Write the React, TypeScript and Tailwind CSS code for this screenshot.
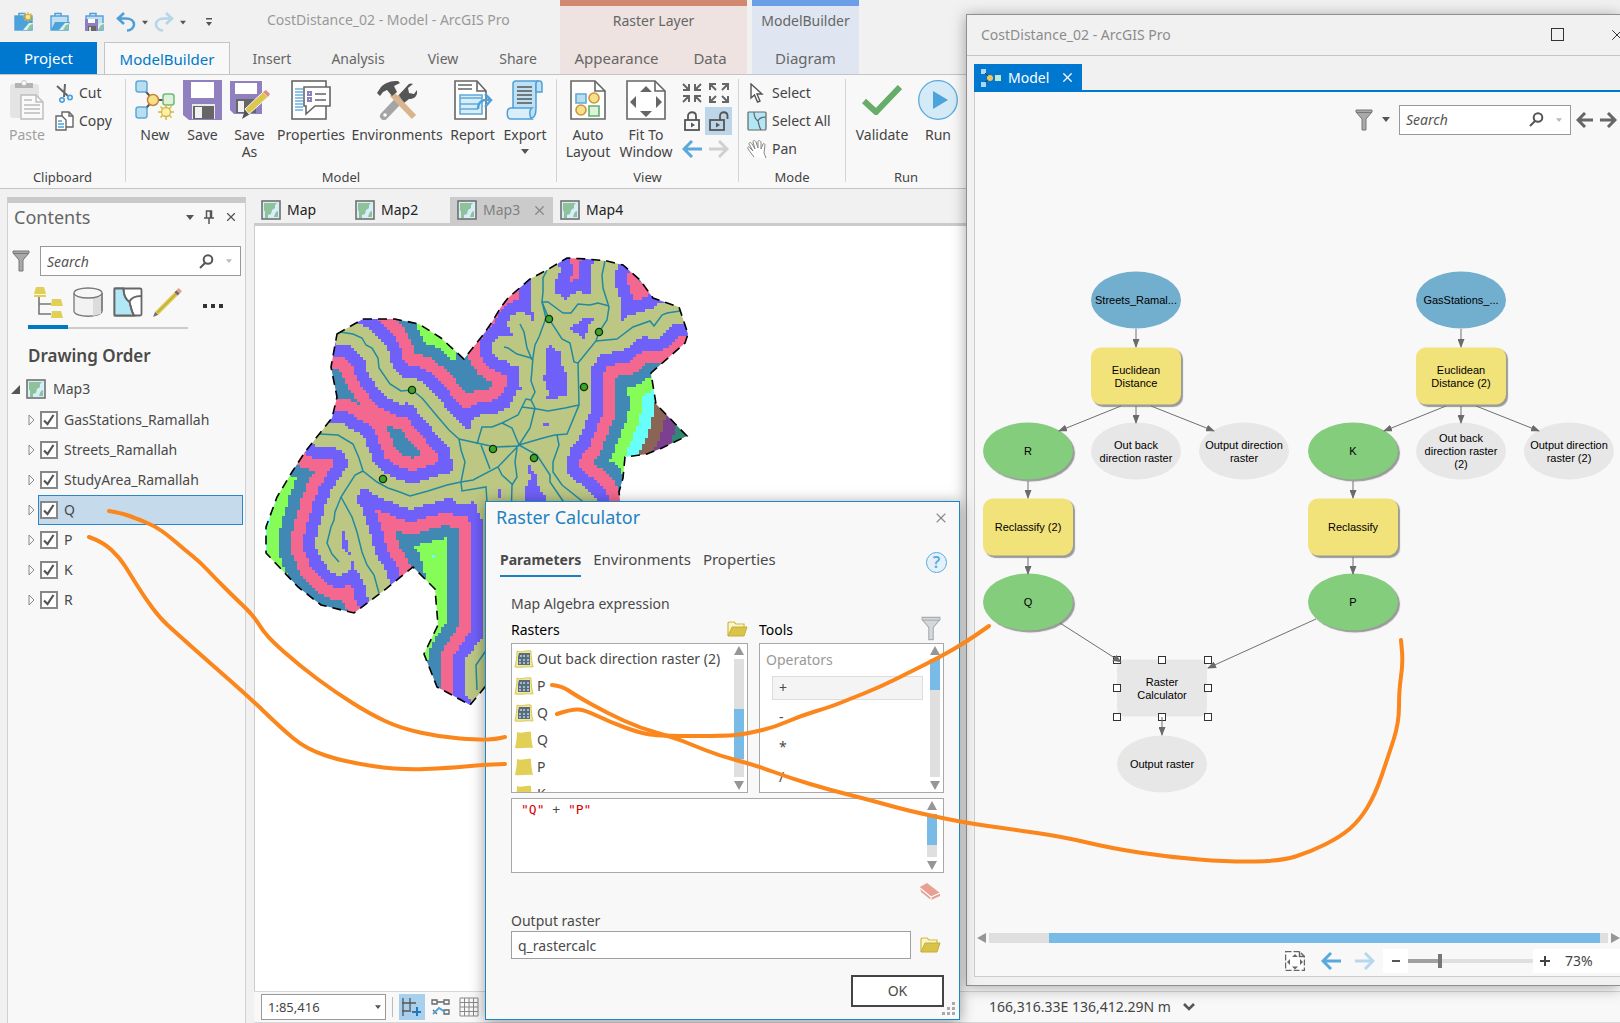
import React from 'react';
import { X } from 'lucide-react';

type Point = [number, number];

/* ---------- map data ---------- */

const STREETS: Point[][] = [
  [[340, 332], [353, 334], [362, 338], [366, 345], [372, 348], [378, 358], [379, 368], [390, 384], [401, 391], [412, 390], [422, 398], [437, 416], [449, 430], [459, 439], [477, 443], [495, 447], [519, 446]],
  [[319, 434], [338, 435], [353, 444], [359, 458], [363, 471], [377, 482], [388, 488], [397, 491], [410, 496], [428, 491], [447, 485], [461, 482], [473, 480], [498, 467], [519, 445]],
  [[363, 471], [355, 475], [341, 497], [335, 512], [334, 520], [331, 527], [327, 543], [332, 554], [339, 562]],
  [[341, 497], [352, 517], [357, 532], [362, 552], [367, 565], [374, 575], [379, 593]],
  [[459, 439], [461, 450], [465, 462], [461, 482], [462, 491], [486, 487], [487, 502], [495, 520], [495, 640], [485, 652], [476, 665], [477, 690]],
  [[547, 270], [543, 278], [543, 292], [542, 302], [546, 318], [539, 337], [535, 345], [533, 357], [532, 370], [531, 381], [535, 392], [531, 400], [535, 408], [530, 428], [519, 445]],
  [[542, 302], [548, 302], [563, 313], [571, 313], [578, 304], [590, 305], [598, 303], [609, 306]],
  [[605, 261], [602, 275], [603, 288], [609, 307], [607, 320], [599, 332], [596, 341], [578, 363]],
  [[542, 302], [549, 319], [562, 339], [570, 343], [574, 362], [578, 363], [579, 405], [567, 434], [555, 435], [543, 438], [519, 445]],
  [[596, 341], [617, 339], [633, 327], [650, 321], [654, 326], [662, 315], [667, 313], [680, 311]],
  [[520, 324], [524, 332], [527, 348], [532, 360]],
  [[504, 347], [508, 348], [517, 354], [531, 358]],
  [[522, 407], [537, 409], [548, 411], [565, 408], [579, 405]],
  [[531, 400], [526, 399], [518, 415], [502, 423], [492, 427], [482, 427], [477, 444]],
  [[502, 423], [512, 428], [519, 445]],
  [[481, 445], [490, 469]],
  [[498, 467], [502, 475], [513, 485]],
  [[517, 448], [515, 462], [517, 477], [512, 485], [511, 520]],
  [[519, 445], [537, 455], [550, 475], [550, 482], [563, 501], [580, 530]],
  [[557, 435], [559, 445], [553, 462], [553, 472], [562, 485], [582, 501], [600, 530]],
];

const STUDY_AREA: Point[] = [
  [337, 334], [363, 319], [395, 319], [419, 324], [441, 338], [464, 359], [483, 335], [492, 322], [501, 307], [508, 298],
  [530, 279], [547, 270], [567, 258], [587, 259], [607, 261], [623, 265], [640, 280], [653, 298], [679, 307], [688, 334],
  [685, 343], [651, 373], [656, 404], [687, 436], [662, 448], [647, 454], [625, 457], [623, 478], [619, 492], [621, 508],
  [600, 560], [560, 640], [500, 680], [485, 687], [470, 705], [452, 695], [437, 687], [424, 654], [438, 625], [435, 589],
  [413, 567], [382, 592], [354, 613], [321, 605], [298, 587], [266, 553], [266, 527], [277, 497], [292, 472], [305, 452],
  [332, 418], [337, 397], [331, 367],
];

const STATIONS: Point[] = [[549, 319], [599, 332], [584, 387], [493, 449], [534, 458], [412, 390], [383, 479]];

const BAND_COLORS = ['#bcc784', '#7060fa', '#f4688f', '#4188b5', '#86fc58', '#66fffa', '#8a6455', '#7b4090', '#308775'];
const BAND_WIDTH = 12.3;
const CELL = 3;

const toPoints = (pts: Point[]) => pts.map((p) => p.join(',')).join(' ');

function distanceToStreets(x: number, y: number) {
  let best = Infinity;
  for (const line of STREETS) {
    for (let i = 1; i < line.length; i++) {
      const [x1, y1] = line[i - 1];
      const [x2, y2] = line[i];
      const dx = x2 - x1;
      const dy = y2 - y1;
      const t = Math.max(0, Math.min(1, ((x - x1) * dx + (y - y1) * dy) / (dx * dx + dy * dy)));
      best = Math.min(best, Math.hypot(x - x1 - t * dx, y - y1 - t * dy));
    }
  }
  return best;
}

// one path per distance band, built from horizontal runs of cells
function buildBands() {
  const paths = BAND_COLORS.map(() => '');
  for (let y = 255; y < 710; y += CELL) {
    let start = 261;
    let current = -1;
    for (let x = 261; x <= 696; x += CELL) {
      const band = x === 696 ? -1 : Math.min(8, Math.floor(distanceToStreets(x + 1, y + 1) / BAND_WIDTH));
      if (band !== current) {
        if (current >= 0) paths[current] += `M${start} ${y}h${x - start}v${CELL}h${start - x}z`;
        start = x;
        current = band;
      }
    }
  }
  return paths;
}

const BANDS = buildBands();

function RasterMap() {
  return (
    <svg width="712" height="765" viewBox="255 226 712 765" className="block shrink-0">
      <clipPath id="study-area">
        <polygon points={toPoints(STUDY_AREA)} />
      </clipPath>
      <g clipPath="url(#study-area)">
        {BANDS.map((d, i) => (
          <path key={i} d={d} fill={BAND_COLORS[i]} shapeRendering="crispEdges" />
        ))}
        {STREETS.map((line, i) => (
          <polyline key={i} points={toPoints(line)} fill="none" stroke="#218aa0" strokeWidth="1.5" />
        ))}
      </g>
      <polygon points={toPoints(STUDY_AREA)} fill="none" stroke="#000" strokeWidth="1.6" strokeDasharray="9 6" />
      {STATIONS.map(([x, y]) => (
        <circle key={x} cx={x} cy={y} r="3.6" fill="#3fa42d" stroke="#10300c" strokeWidth="1.3" />
      ))}
    </svg>
  );
}

/* ---------- icons ---------- */

const Caret = ({ className = 'fill-[#555]' }: { className?: string }) => (
  <svg width="8" height="5" viewBox="0 0 8 5" className={className}><path d="M0 0h8L4 5z" /></svg>
);

const Funnel = ({ light = false }: { light?: boolean }) => (
  <svg width={light ? 20 : 18} height={light ? 25 : 22} viewBox="0 0 18 22" fill={light ? '#d5d8db' : '#a9a9a9'} stroke={light ? '#a9adb0' : '#777'}>
    <path d="M1 1h16v2l-6 7v11H7V10L1 3z" /><path d="M1 3.5h16" />
  </svg>
);

const Magnifier = () => (
  <svg width="15" height="15" viewBox="0 0 15 15" fill="none" stroke="#555" strokeWidth="2">
    <circle cx="9" cy="5.5" r="4.3" /><path d="M6 9L1 14" />
  </svg>
);

const Arrow = ({ color, flip = false }: { color: string; flip?: boolean }) => (
  <svg width="20" height="18" viewBox="0 0 20 18" fill="none" stroke={color} strokeWidth="3" className={flip ? 'rotate-180' : ''}>
    <path d="M20 9H3M10 1L2 9l8 8" />
  </svg>
);

const MapIcon = () => (
  <svg width="20" height="20" viewBox="0 0 20 20" className="shrink-0">
    <rect x="1" y="1" width="18" height="18" fill="#d6eef8" stroke="#707070" strokeWidth="1.6" />
    <path d="M3 3h13l-2 2v3l-3 2-1 4-3 1v3H4v-6L3 10z" fill="#8fc19a" />
    <path d="M15 12l2-1v6h-4l1-3z" fill="#8fc19a" />
  </svg>
);

const Folder = () => (
  <svg width="21" height="16" viewBox="0 0 21 16">
    <path d="M1 15V2l1-1h5l2 2h8v4" fill="#faf5cf" stroke="#cdb93e" strokeWidth="1.2" />
    <path d="M1 15l4-9h15l-3 9z" fill="#d9c348" stroke="#c5af35" />
  </svg>
);

const Pencil = ({ size = 30 }: { size?: number }) => (
  <svg width={size} height={size} viewBox="0 0 28 28">
    <path d="M0 28l2-5 3 3z" fill="#6d6d6d" />
    <path d="M2 23L20 5l3 3L5 26z" fill="#dcc84c" />
    <path d="M4 24L22 6" stroke="#b9a437" />
    <path d="M20 5l2-2 3 3-2 2z" fill="#6b6b6b" />
    <path d="M22 3l2-2 3 3-2 2z" fill="#e79c8f" />
  </svg>
);

const Briefcase = ({ kind }: { kind: 'new' | 'open' | 'save' }) => (
  <svg width="21" height="20" viewBox="0 0 21 20">
    <path d="M5 4V1.500h6V4" fill="none" stroke="#4e9fd8" strokeWidth="1.5" />
    <rect x="1" y="4" width="17" height="14" fill={kind === 'new' ? '#4ca3dc' : '#bfe0f3'} stroke="#4e9fd8" strokeWidth="1.4" />
    {kind === 'open' && <path d="M1 18l4-8h15l-3 8z" fill="#4ca3dc" />}
    <path d="M9 18l6-7h4l-2 7z" fill="#dff0e6" />
    <path d="M13 18l3-5 3-1-2 6z" fill="#8cc2a0" />
    {kind === 'new' && <path d="M14 0v10M9 5h10M10.500 1.500l7 7M17.500 1.500l-7 7" stroke="#dcb53c" strokeWidth="1.2" />}
    {kind === 'new' && <circle cx="14" cy="5" r="2.8" fill="#f8e58c" stroke="#d5ac35" />}
    {kind === 'save' && (
      <g>
        <path d="M0 7h13v12H0z" fill="#8f7fbe" /><path d="M3 7h7v4H3z" fill="#fff" /><path d="M3 14h8v5H3z" fill="#666" /><path d="M4 15h2v4H4z" fill="#ddd" />
      </g>
    )}
  </svg>
);

const Undo = ({ color, flip = false }: { color: string; flip?: boolean }) => (
  <svg width="20" height="20" viewBox="0 0 20 20" fill="none" stroke={color} strokeWidth="2.6" className={flip ? '-scale-x-100' : ''}>
    <path d="M8 1L2 6.500 8 12M2 6.500h8c5 0 8 2.500 8 6 0 3-3 6-7 6" />
  </svg>
);

const PasteIcon = () => (
  <svg width="36" height="40" viewBox="0 0 36 40">
    <rect x="1" y="4" width="29" height="34" rx="3" fill="#e4e4e4" />
    <path d="M6 3h18v5H6z" fill="#b3b3b3" /><circle cx="15" cy="3" r="2.500" fill="#fff" stroke="#c5c5c5" />
    <path d="M12 15h15l7 7v17H12z" fill="#fafafa" stroke="#bcbcbc" strokeWidth="1.4" />
    <path d="M27 15v7h7M15 20h8M15 25h16M15 29h16M15 33h16" fill="none" stroke="#bcbcbc" strokeWidth="1.4" />
  </svg>
);

const CutIcon = () => (
  <svg width="17" height="19" viewBox="0 0 17 19" fill="none">
    <path d="M1 2l11 10M9 0l-1 13" stroke="#666" strokeWidth="2" />
    <circle cx="6" cy="16" r="2.200" stroke="#4ca3dc" strokeWidth="1.700" /><circle cx="14" cy="13.500" r="2.200" stroke="#4ca3dc" strokeWidth="1.700" />
  </svg>
);

const CopyIcon = () => (
  <svg width="19" height="20" viewBox="0 0 19 20" fill="#fff" stroke="#666" strokeWidth="1.400">
    <path d="M7 1h7l4 4v11H7z" /><path d="M14 1v4h4" fill="none" />
    <path d="M1 5h6l4 4v10H1z" /><path d="M3 10h4M3 13h6M3 16h6" stroke="#4ca3dc" />
  </svg>
);

const NewModelIcon = () => (
  <svg width="40" height="40" viewBox="0 0 40 40">
    <path d="M8 8l10 12L8 32M18 20h14" stroke="#555" strokeWidth="2" fill="none" />
    <rect x="1" y="1" width="11" height="11" rx="2.500" fill="#b8def2" stroke="#62a8d6" strokeWidth="1.500" />
    <rect x="1" y="27" width="11" height="11" rx="2.500" fill="#b8def2" stroke="#62a8d6" strokeWidth="1.500" />
    <circle cx="18" cy="20" r="5.500" fill="#f6e18a" stroke="#c9823c" strokeWidth="1.500" />
    <rect x="28" y="14" width="11" height="11" rx="2.500" fill="#ddf1dd" stroke="#6dba74" strokeWidth="1.500" />
    <path d="M31 24v16M23 32h16M25.500 26.500l11 11M36.500 26.500l-11 11" stroke="#d8b63e" strokeWidth="1.500" />
    <circle cx="31" cy="32" r="4.500" fill="#faf0ae" stroke="#d8b63e" strokeWidth="1.300" />
  </svg>
);

const SaveIcon = () => (
  <svg width="40" height="40" viewBox="0 0 40 40">
    <path d="M0 0h39v40H6l-6-5z" fill="#9080bf" /><path d="M8 2h23v16H8z" fill="#fff" />
    <path d="M9 24h23v15H9z" fill="#e9e9e9" /><path d="M10 26h21v13H10z" fill="#666" /><path d="M12 27h7v11h-7z" fill="#f1f1f1" />
  </svg>
);

const SaveAsIcon = () => (
  <svg width="40" height="40" viewBox="0 0 40 40">
    <path d="M0 1h32v33H4l-4-4z" fill="#9080bf" /><path d="M5 3h22v11H5z" fill="#fff" />
    <path d="M6 19h20v14H6z" fill="#666" /><path d="M8 21h6v11H8z" fill="#f1f1f1" />
    <path d="M12 39l3-9 5 4z" fill="#555" /><path d="M15 29L33 12l5 5-19 17z" fill="#dcc84c" stroke="#f8f8f8" />
    <path d="M33 12l3-2 4 4-2 3z" fill="#dd8d84" />
  </svg>
);

const PropertiesIcon = () => (
  <svg width="40" height="40" viewBox="0 0 40 40" fill="#fff" stroke="#666" strokeWidth="1.600">
    <rect x="1" y="1" width="34" height="38" />
    <path d="M4 9h8M4 12h8M4 15h8M4 18h8M4 21h8M4 24h8M4 27h8M4 30h8" stroke="#69b1e0" strokeWidth="1.300" />
    <path d="M13 7h26v19H24l-9 8v-8h-2z" />
    <path d="M17 12h3v3h-3zM17 18h3v3h-3z" stroke="#8f7fbe" strokeWidth="2" /><path d="M24 14h11M24 20h11" />
  </svg>
);

const ToolsIcon = () => (
  <svg width="40" height="40" viewBox="0 0 40 40">
    <path d="M27 15L7 36" stroke="#a5a5a5" strokeWidth="8" strokeLinecap="round" /><circle cx="8" cy="35" r="1.800" fill="#fff" />
    <path d="M22 15l8-9c2-3 4-3 6-2l-5 4 1 5 5 1 3-4c1 6-3 9-8 9l-5 4z" fill="#555" />
    <path d="M15 14l22 23" stroke="#d8b58d" strokeWidth="6" />
    <path d="M0 13l4-6C9 2 14 1 21 1l2 2-6 3 3 6-5 4-5-6-4 2-3 4z" fill="#555" />
  </svg>
);

const ReportIcon = () => (
  <svg width="40" height="40" viewBox="0 0 40 40" fill="#fff" stroke="#666" strokeWidth="1.600">
    <path d="M2 1h22l9 10v28H2z" /><path d="M24 1v10h9M5 5h14M5 9h14" fill="none" />
    <path d="M7 15h22v19H7z" fill="#d7edf8" stroke="#62a8d6" /><path d="M7 18h22M7 24h18M7 29h18" stroke="#62a8d6" />
    <path d="M25 29c0-7 4-10 13-9M32 14l6 6-6 7" fill="none" stroke="#4ca3dc" strokeWidth="2.500" />
  </svg>
);

const ExportIcon = () => (
  <svg width="38" height="40" viewBox="0 0 38 40" fill="#bfe0f3" stroke="#4e9fd8" strokeWidth="1.500">
    <path d="M7 29V4c0-2 1-3 3-3h22c-2 1-2 3-2 5v22c0 5-1 10-5 10" />
    <path d="M30 12h6V4c0-4-5-4-6-1z" /><path d="M5 28h21c-3 2-3 8 0 11H5c-5 0-5-11 0-11z" fill="#d9eef9" />
    <path d="M11 7h15M11 11h15M11 15h15M11 19h15M11 23h15" stroke="#555" />
  </svg>
);

const AutoLayoutIcon = () => (
  <svg width="36" height="40" viewBox="0 0 36 40" strokeWidth="1.600">
    <path d="M1 1h24l10 10v28H1z" fill="#fff" stroke="#666" /><path d="M25 1v10h10" fill="none" stroke="#666" />
    <path d="M6 14h10v9H6z" fill="#b8def2" stroke="#62a8d6" /><circle cx="24" cy="18" r="5" fill="#f6e18a" stroke="#c9963c" />
    <circle cx="11" cy="30" r="5" fill="#f6e18a" stroke="#c9963c" /><path d="M19 26h10v10H19z" fill="#ddf1dd" stroke="#5fb069" />
  </svg>
);

const FitIcon = ({ small = false }: { small?: boolean }) => (
  <svg width={small ? 20 : 40} height={small ? 20 : 40} viewBox="0 0 40 40" strokeWidth={small ? 3 : 1.6}>
    <path d="M1 1h28l10 10v28H1z" fill="#fff" stroke="#666" strokeDasharray={small ? '12 4' : undefined} />
    <path d="M29 1v10h10" fill="none" stroke="#666" />
    <path d="M14 12h12l-6-6zM14 31h12l-6 6zM10 16v12l-6-6zM30 16v12l6-6z" fill="#666" />
  </svg>
);

const CornerArrows = ({ inward = false }: { inward?: boolean }) => (
  <svg width="20" height="20" viewBox="0 0 20 20" fill="none" stroke="#666" strokeWidth="2">
    {inward ? (
      <path d="M1 1l6 6M7 1v6H1M19 1l-6 6M13 1v6h6M1 19l6-6M7 19v-6H1M19 19l-6-6M13 19v-6h6" />
    ) : (
      <path d="M1 1l6 6M1 7V1h6M19 1l-6 6M19 7V1h-6M1 19l6-6M1 13v6h6M19 19l-6-6M19 13v6h-6" />
    )}
  </svg>
);

const LockIcon = ({ open = false }: { open?: boolean }) => (
  <svg width="20" height="20" viewBox="0 0 20 20" fill="none" stroke="#555" strokeWidth="1.800">
    <rect x={open ? 1 : 3} y="9" width="14" height="10" />
    <path d={open ? 'M11 9V5c0-5 7.500-5 7.500 0v3' : 'M6 9V5c0-5 8-5 8 0v4'} />
    <path d={open ? 'M7 11.500l4 2.500-4 2.500z' : 'M9 11.500l4 2.500-4 2.500z'} fill="#555" stroke="none" />
  </svg>
);

const CursorIcon = () => (
  <svg width="20" height="20" viewBox="0 0 20 20" fill="#fff" stroke="#555" strokeWidth="1.400">
    <path d="M4 1v14l3.500-3 3 7 2.500-1-3-7h5z" />
  </svg>
);

const SelectAllIcon = ({ size = 20, half = false }: { size?: number; half?: boolean }) => (
  <svg width={size} height={size} viewBox="0 0 20 20" fill="none" stroke="#666" strokeWidth="1.200">
    <rect x="1" y="1" width="18" height="18" rx="1" fill={half ? '#fff' : '#b2e7f6'} />
    {half && <path d="M1 1h6c0 4 1 7 4 9 1 3 1 6 3 9H1z" fill="#b2e7f6" />}
    <path d="M7 1c0 4 1 7 4 9 1 3 1 6 3 9M11 10c1-3 4-4 8-4" />
  </svg>
);

const HandIcon = () => (
  <svg width="20" height="20" viewBox="0 0 20 20" fill="#fff" stroke="#888">
    <path d="M7 18l-6-8c-1-2 1-3 2-1l3 3-4-7c0-2 2-2 3 0l3 5-2-7c0-2 2-2 3 0l2 6V3c0-2 2-2 3 0v7l2-5c1-1 2 0 2 1l-1 8 2 5" />
  </svg>
);

const ListByOrder = () => (
  <svg width="30" height="31" viewBox="0 0 30 31">
    <path d="M6 10v17h12M6 17h12" fill="none" stroke="#777" strokeWidth="1.600" />
    <path d="M3 0h8l2 7H1zM1 8h12v2H1zM19 12h9l2 7H18zM19 24h9l2 7H18z" fill="#e2cf55" />
  </svg>
);

const Cylinder = () => (
  <svg width="30" height="30" viewBox="0 0 30 30" stroke="#777" strokeWidth="1.300">
    <path d="M1 6v18c0 7 28 7 28 0V6" fill="#f2f2f2" /><path d="M20 10h8v17l-8 2z" fill="#dcdcdc" stroke="none" />
    <path d="M29 6v18" /><ellipse cx="15" cy="6" rx="14" ry="5" fill="#f7f7f7" />
  </svg>
);

const RasterIcon = ({ grid = false }: { grid?: boolean }) => (
  <svg width="20" height="18" viewBox="0 0 20 18" className="shrink-0">
    <path d="M3 1c4 2 9-1 14 0 0 6 1 12 2 16-6-1-12 1-18 0 1-5 2-10 2-16z" fill={grid ? '#f2e69a' : '#e2cf55'} stroke={grid ? '#d8c75a' : 'none'} />
    {grid && <path d="M5 3h11v12H4V7z" fill="#5e6a74" />}
    {grid && <path d="M6 5h2v2H6zM9 5h2v2H9zM13 5h2v2h-2zM5 9h2v2H5zM9 9h2v2H9zM13 9h2v2h-2zM5 12h2v2H5zM9 12h2v2H9zM13 12h2v2h-2z" fill="#8fc0e0" />}
  </svg>
);

const Eraser = () => (
  <svg width="21" height="19" viewBox="0 0 21 19">
    <path d="M0 5l7-4 13 10v3l-9 4L1 10z" fill="#e6a094" />
    <path d="M0 6l11 9 9-4M11 15v3" fill="none" stroke="#fff" strokeWidth="1.100" />
  </svg>
);

const ModelGlyph = () => (
  <svg width="20" height="20" viewBox="0 0 20 20">
    <path d="M0 1h5v5H0zM0 14h5v5H0z" fill="#a9d8f5" /><path d="M4 5l4 4M4 14l4-3" stroke="#333" />
    <circle cx="9" cy="10" r="3" fill="#f3c35e" /><path d="M14 7h6v6h-6z" fill="#bfe6d0" />
  </svg>
);

/* ---------- small shared pieces ---------- */

function BigButton({ icon, label, width, muted = false, caret = false }: { icon: React.ReactNode; label: string; width: string; muted?: boolean; caret?: boolean }) {
  return (
    <button className={`flex flex-col items-center ${width}`}>
      <span className="flex h-[42px] items-center justify-center">{icon}</span>
      <span className={`mt-[5px] whitespace-pre text-center leading-[17px] ${muted ? 'text-[#a0a0a0]' : ''}`}>{label}</span>
      {caret && <span className="mt-1.5"><Caret /></span>}
    </button>
  );
}

function RibbonGroup({ label, width, children }: { label: string; width: string; children: React.ReactNode }) {
  return (
    <section className={`flex shrink-0 flex-col ${width}`}>
      <div className="flex flex-1">{children}</div>
      <h2 className="pb-[3px] text-center text-[13px] leading-4">{label}</h2>
    </section>
  );
}

const Divider = () => <div className="h-[103px] w-px shrink-0 bg-[#d4d4d4]" />;

function SmallButton({ icon, label }: { icon: React.ReactNode; label: string }) {
  return (
    <button className="flex h-7 items-center gap-[5px]">
      <span className="flex w-5 justify-center">{icon}</span>
      {label}
    </button>
  );
}

function SearchBox({ id, className }: { id: string; className: string }) {
  return (
    <div className={`flex h-[30px] items-center border border-[#999] bg-white pr-2 ${className}`}>
      <label htmlFor={id} className="sr-only">Search</label>
      <input id={id} placeholder="Search" className="h-7 min-w-0 flex-1 bg-transparent px-1.5 italic outline-none placeholder:text-[#555]" />
      <Magnifier />
      <span className="ml-3"><Caret className="h-1 w-1.5 fill-[#bbb]" /></span>
    </div>
  );
}

function VerticalScroll({ before, thumb, after }: { before: string; thumb: string; after: string }) {
  return (
    <div className="flex w-[10px] shrink-0 flex-col items-center gap-1 py-0.5">
      <svg width="10" height="9" viewBox="0 0 10 9" fill="#969696"><path d="M0 9h10L5 0z" /></svg>
      <div className="flex w-full flex-1 flex-col bg-[#dfdfdf]">
        <div className={before} />
        <div className={`bg-[#78bbe6] ${thumb}`} />
        <div className={after} />
      </div>
      <svg width="10" height="9" viewBox="0 0 10 9" fill="#969696"><path d="M0 0h10L5 9z" /></svg>
    </div>
  );
}

/* ---------- ribbon ---------- */

function Header() {
  return (
    <header className="flex h-[74px] text-[#666]">
      <div className="flex w-[560px] shrink-0 flex-col">
        <div className="flex h-[42px] items-center pl-[14px] pt-0.5">
          <button aria-label="New project"><Briefcase kind="new" /></button>
          <button aria-label="Open project" className="ml-[15px]"><Briefcase kind="open" /></button>
          <button aria-label="Save project" className="ml-[14px]"><Briefcase kind="save" /></button>
          <button aria-label="Undo" className="ml-2.5 flex items-center gap-1.5"><Undo color="#4e9fd8" /><Caret className="w-1.5 fill-[#555]" /></button>
          <button aria-label="Redo" className="ml-1.5 flex items-center gap-1.5"><Undo color="#b5d5e8" flip /><Caret className="w-1.5 fill-[#555]" /></button>
          <button aria-label="Customize" className="ml-5">
            <svg width="6" height="8" viewBox="0 0 6 8" fill="#555"><path d="M0 0h6v1.500H0zM0 4h6L3 8z" /></svg>
          </button>
          <h1 className="ml-[55px] pb-1 text-[#999]">CostDistance_02 - Model - ArcGIS Pro</h1>
        </div>
        <nav className="flex h-8">
          <button className="w-[97px] bg-[#0078d0] pt-0.5 text-[15px] text-white">Project</button>
          <button className="ml-[7px] w-[126px] border border-b-0 border-[#c4c4c4] bg-[#f8f8f8] pt-0.5 text-[15px] text-[#0078c8]">ModelBuilder</button>
          <button className="w-[84px] pt-0.5">Insert</button>
          <button className="w-[88px] pt-0.5">Analysis</button>
          <button className="w-[82px] pt-0.5">View</button>
          <button className="w-[68px] pt-0.5">Share</button>
        </nav>
      </div>
      <div className="flex w-[187px] shrink-0 flex-col border-t-[6px] border-[#d18871] bg-[#eee3e0]">
        <div className="flex h-9 items-center justify-center pb-1.5">Raster Layer</div>
        <div className="flex h-8">
          <button className="w-[116px] pt-0.5 text-[15px]">Appearance</button>
          <button className="w-[76px] pt-0.5 text-[15px]">Data</button>
        </div>
      </div>
      <div className="ml-[5px] flex w-[107px] shrink-0 flex-col border-t-[6px] border-[#6a9fe8] bg-[#e0e6f1]">
        <div className="flex h-9 items-center justify-center pb-1.5">ModelBuilder</div>
        <button className="h-8 pt-0.5 text-[15px]">Diagram</button>
      </div>
    </header>
  );
}

function Ribbon() {
  return (
    <div className="flex h-[115px] border-y border-[#c4c4c4] bg-[#f8f8f8] pt-1 text-[#444]">
      <RibbonGroup label="Clipboard" width="w-[125px]">
        <BigButton icon={<PasteIcon />} label="Paste" width="w-[54px]" muted />
        <div className="flex flex-col">
          <SmallButton icon={<CutIcon />} label="Cut" />
          <SmallButton icon={<CopyIcon />} label="Copy" />
        </div>
      </RibbonGroup>
      <Divider />
      <RibbonGroup label="Model" width="w-[430px]">
        <BigButton icon={<NewModelIcon />} label="New" width="ml-[5px] w-12" />
        <BigButton icon={<SaveIcon />} label="Save" width="w-[47px]" />
        <BigButton icon={<SaveAsIcon />} label={'Save\nAs'} width="w-[47px]" />
        <BigButton icon={<PropertiesIcon />} label="Properties" width="w-[76px]" />
        <BigButton icon={<ToolsIcon />} label="Environments" width="w-24" />
        <BigButton icon={<ReportIcon />} label="Report" width="w-[55px]" />
        <BigButton icon={<ExportIcon />} label="Export" width="w-[50px]" caret />
      </RibbonGroup>
      <Divider />
      <RibbonGroup label="View" width="w-[181px]">
        <BigButton icon={<AutoLayoutIcon />} label={'Auto\nLayout'} width="ml-[3px] w-[56px]" />
        <BigButton icon={<FitIcon />} label={'Fit To\nWindow'} width="w-[60px]" />
        <div className="ml-0.5 grid auto-rows-[28px] grid-cols-[27px_27px] place-items-center">
          <button aria-label="Shrink"><CornerArrows inward /></button>
          <button aria-label="Expand"><CornerArrows /></button>
          <button aria-label="Lock"><LockIcon /></button>
          <button aria-label="Unlock" className="flex h-full w-full items-center justify-center bg-[#bcd5e8]"><LockIcon open /></button>
          <button aria-label="Previous view"><Arrow color="#5aa9dd" /></button>
          <button aria-label="Next view"><Arrow color="#d0d0d0" flip /></button>
        </div>
      </RibbonGroup>
      <Divider />
      <RibbonGroup label="Mode" width="w-[106px]">
        <div className="ml-2 flex flex-col">
          <SmallButton icon={<CursorIcon />} label="Select" />
          <SmallButton icon={<SelectAllIcon />} label="Select All" />
          <SmallButton icon={<HandIcon />} label="Pan" />
        </div>
      </RibbonGroup>
      <Divider />
      <RibbonGroup label="Run" width="w-[120px]">
        <BigButton
          icon={<svg width="40" height="30" viewBox="0 0 40 30"><path d="M2 16l12 11L38 2" fill="none" stroke="#67ad69" strokeWidth="6" /></svg>}
          label="Validate"
          width="ml-1 w-16"
        />
        <BigButton
          icon={<svg width="40" height="40" viewBox="0 0 40 40"><circle cx="20" cy="20" r="19.300" fill="#d4eaf7" stroke="#5aa9dd" strokeWidth="1.300" /><path d="M15 11v18l15-9z" fill="#4ca3dc" /></svg>}
          label="Run"
          width="w-12"
        />
      </RibbonGroup>
    </div>
  );
}

/* ---------- contents pane ---------- */

const LAYERS = ['GasStations_Ramallah', 'Streets_Ramallah', 'StudyArea_Ramallah', 'Q', 'P', 'K', 'R'];

function ContentsPane() {
  return (
    <aside className="mt-2 flex w-[239px] shrink-0 flex-col border-x border-t-[6px] border-x-[#d0d0d0] border-t-[#c9c9c9] bg-[#f8f8f8] text-[#4a4a4a]">
      <div className="flex h-7 items-center pl-1.5 pr-[7px]">
        <h2 className="flex-1 text-lg text-[#666]">Contents</h2>
        <Caret />
        <svg width="10" height="14" viewBox="0 0 10 14" className="ml-2.5 mr-2.5" fill="none" stroke="#555" strokeWidth="1.500"><path d="M2.500 8V1h5v7M0 8h10M5 8v6M6.500 1v7" /></svg>
        <button aria-label="Close contents"><X size={14} color="#555" /></button>
      </div>
      <div className="mt-[15px] flex items-center pl-1">
        <Funnel />
        <SearchBox id="contents-search" className="ml-2.5 w-[201px]" />
      </div>
      <div className="mt-2.5 flex h-8 items-center pl-[25px]">
        <button aria-label="List by drawing order"><ListByOrder /></button>
        <button aria-label="List by data source" className="ml-2.5"><Cylinder /></button>
        <button aria-label="List by selection" className="ml-2.5"><SelectAllIcon size={30} half /></button>
        <button aria-label="List by editing" className="ml-2.5"><Pencil /></button>
        <button aria-label="More" className="ml-5 mt-2 flex gap-1">
          <span className="size-1 bg-[#333]" /><span className="size-1 bg-[#333]" /><span className="size-1 bg-[#333]" />
        </button>
      </div>
      <div className="ml-5 mt-[7px] flex items-end">
        <div className="h-1 w-10 bg-[#0078c8]" />
        <div className="h-0.5 w-[120px] bg-[#ccc]" />
      </div>
      <h3 className="mt-[15px] pl-5 text-[17px] font-semibold leading-6">Drawing Order</h3>
      <div className="mt-[5px] flex h-8 items-center pl-[3px]">
        <svg width="9" height="9" viewBox="0 0 9 9" fill="#555"><path d="M9 0v9H0z" /></svg>
        <span className="ml-1.5 mr-[7px]"><MapIcon /></span>
        Map3
      </div>
      <ul>
        {LAYERS.map((name) => (
          <li key={name} className="flex h-[30px] items-center pl-5">
            <svg width="7" height="12" viewBox="0 0 7 12" fill="none" stroke="#888"><path d="M1 1v10l5-5z" /></svg>
            <label className={`ml-[3px] mr-0.5 flex h-full flex-1 items-center border pl-px ${name === 'Q' ? 'border-[#2a86c8] bg-[#c5dbec]' : 'border-transparent'}`}>
              <span className="grid">
                <input type="checkbox" defaultChecked className="col-start-1 row-start-1 size-[18px] appearance-none border-2 border-[#888] bg-white" />
                <svg width="18" height="18" viewBox="0 0 18 18" className="pointer-events-none col-start-1 row-start-1" fill="none" stroke="#555" strokeWidth="2.200"><path d="M4 9.500l3.500 3.500L13.500 4" /></svg>
              </span>
              <span className="ml-1.5">{name}</span>
            </label>
          </li>
        ))}
      </ul>
    </aside>
  );
}

/* ---------- map view ---------- */

function MapTab({ label, width, active = false }: { label: string; width: string; active?: boolean }) {
  return (
    <button className={`flex h-[26px] items-center gap-1.5 pl-[7px] ${width} ${active ? 'bg-[#cbcbcb] text-[#808080]' : 'text-[#222]'}`}>
      <MapIcon />
      {label}
      {active && <X size={15} className="ml-1.5" color="#888" />}
    </button>
  );
}

function MapView() {
  return (
    <main className="ml-2 flex min-w-0 flex-1 flex-col pt-2">
      <div className="flex border-b-[3px] border-[#cbcbcb]">
        <MapTab label="Map" width="w-[94px]" />
        <MapTab label="Map2" width="w-[102px]" />
        <MapTab label="Map3" width="w-[103px]" active />
        <MapTab label="Map4" width="w-24" />
      </div>
      <div className="min-h-0 flex-1 overflow-hidden border-l border-[#ccc] bg-white">
        <RasterMap />
      </div>
      <footer className="flex h-8 items-center border-y border-[#d8d8d8] bg-[#f8f8f8] pl-[7px] text-[#444]">
        <label htmlFor="scale" className="sr-only">Map scale</label>
        <div className="flex h-[26px] w-[125px] items-center border border-[#999] bg-white pr-1">
          <select id="scale" className="h-6 flex-1 appearance-none bg-transparent px-1.5 text-[13px] leading-6 outline-none">
            <option>1:85,416</option>
          </select>
          <Caret className="h-1 w-1.5 fill-[#555]" />
        </div>
        <div className="mx-[6px] h-5 w-px bg-[#bbb]" />
        <button aria-label="Grid snapping" className="flex size-[26px] items-center justify-center bg-[#a8d0ec]">
          <svg width="20" height="20" viewBox="0 0 20 20" fill="none" stroke="#555" strokeWidth="1.300"><path d="M1 1v18M8 1v12M0 6h14M0 14h9" /><path d="M15 10v9M10 15h9" stroke="#2277b8" strokeWidth="2" /></svg>
        </button>
        <button aria-label="Dynamic constraints" className="ml-[3px] flex size-[26px] items-center justify-center">
          <svg width="20" height="18" viewBox="0 0 20 18" fill="none" stroke="#666" strokeWidth="1.300"><path d="M1 2h5v4H1zM13 2h5v4h-5zM6 4h7M2 12l4 4M13 12h5v4h-5z" /><path d="M2 16l6-6 6 4" stroke="#4ca3dc" strokeWidth="1.800" /></svg>
        </button>
        <button aria-label="Show grid" className="ml-0.5 flex size-[26px] items-center justify-center">
          <svg width="20" height="20" viewBox="0 0 20 20" fill="none" stroke="#888"><path d="M1 1h18v18H1zM5.500 1v18M10 1v18M14.500 1v18M1 5.500h18M1 10h18M1 14.500h18" /></svg>
        </button>
        <div className="ml-[507px] flex items-center gap-3 whitespace-nowrap">
          166,316.33E 136,412.29N m
          <svg width="12" height="8" viewBox="0 0 12 8" fill="none" stroke="#555" strokeWidth="2.600"><path d="M1 1l5 5 5-5" /></svg>
        </div>
      </footer>
    </main>
  );
}

/* ---------- model window ---------- */

interface ModelNode {
  label: string;
  x: number;
  y: number;
  kind: 'data' | 'tool' | 'derived' | 'empty' | 'emptyTool';
}

const NODES: ModelNode[] = [
  { label: 'Streets_Ramal...', x: 161, y: 156, kind: 'data' },
  { label: 'Euclidean\nDistance', x: 161, y: 232, kind: 'tool' },
  { label: 'R', x: 53, y: 307, kind: 'derived' },
  { label: 'Out back\ndirection raster', x: 161, y: 307, kind: 'empty' },
  { label: 'Output direction\nraster', x: 269, y: 307, kind: 'empty' },
  { label: 'Reclassify (2)', x: 53, y: 383, kind: 'tool' },
  { label: 'Q', x: 53, y: 458, kind: 'derived' },
  { label: 'GasStations_...', x: 486, y: 156, kind: 'data' },
  { label: 'Euclidean\nDistance (2)', x: 486, y: 232, kind: 'tool' },
  { label: 'K', x: 378, y: 307, kind: 'derived' },
  { label: 'Out back\ndirection raster\n(2)', x: 486, y: 307, kind: 'empty' },
  { label: 'Output direction\nraster (2)', x: 594, y: 307, kind: 'empty' },
  { label: 'Reclassify', x: 378, y: 383, kind: 'tool' },
  { label: 'P', x: 378, y: 458, kind: 'derived' },
  { label: 'Raster\nCalculator', x: 187, y: 544, kind: 'emptyTool' },
  { label: 'Output raster', x: 187, y: 620, kind: 'empty' },
];

const NODE_STYLES = {
  data: 'rounded-[50%] bg-[#72aecd]',
  tool: 'rounded-[10px] bg-[#f2e27a] shadow-[2px_2px_1px_#9a9a9a]',
  derived: 'rounded-[50%] bg-[#84cd7d] shadow-[2px_2px_1px_#9a9a9a]',
  empty: 'rounded-[50%] bg-[#e7e7e7]',
  emptyTool: 'rounded-lg bg-[#e7e7e7]',
};

const EDGES: [number, number, number, number][] = [
  [161, 185, 161, 203], [146, 262, 84, 287], [161, 262, 161, 279], [176, 262, 239, 287],
  [53, 337, 53, 354], [53, 413, 53, 430],
  [486, 185, 486, 203], [471, 262, 409, 287], [486, 262, 486, 279], [501, 262, 564, 287],
  [378, 337, 378, 354], [378, 413, 378, 430],
  [85, 479, 146, 518], [341, 475, 233, 524],
];

const HANDLES: Point[] = [[142, 516], [187, 516], [233, 516], [142, 544], [233, 544], [142, 573], [187, 573], [233, 573]];

function ModelCanvas() {
  return (
    <div className="relative mt-[9px] min-h-0 flex-1 overflow-hidden font-['Liberation_Sans',Arial,sans-serif] text-[11px] leading-[13px] text-black">
      {NODES.map((node) => (
        <div
          key={`${node.label}-${node.x}`}
          className={`absolute flex h-[57px] w-[90px] -translate-x-1/2 -translate-y-1/2 items-center justify-center whitespace-pre text-center ${NODE_STYLES[node.kind]}`}
          style={{ left: node.x, top: node.y }}
        >
          {node.label}
        </div>
      ))}
      <svg width="645" height="680" className="pointer-events-none absolute left-0 top-0">
        <defs>
          <marker id="tip" viewBox="0 0 9 7" refX="8" refY="3.500" markerWidth="9" markerHeight="7" orient="auto" markerUnits="userSpaceOnUse">
            <path d="M0 0l9 3.500L0 7z" fill="#6b6b6b" />
          </marker>
        </defs>
        {HANDLES.map(([x, y]) => (
          <rect key={`${x}-${y}`} x={x - 3.5} y={y - 3.5} width="7" height="7" fill="#fff" stroke="#333" />
        ))}
        {EDGES.map((e) => (
          <line key={e.join()} x1={e[0]} y1={e[1]} x2={e[2]} y2={e[3]} stroke="#707070" markerEnd="url(#tip)" />
        ))}
        <line x1="187" y1="573" x2="187" y2="591" stroke="#707070" markerEnd="url(#tip)" />
      </svg>
    </div>
  );
}

function ModelWindow() {
  return (
    <section className="absolute bottom-[37px] left-[966px] right-0 top-[14px] flex flex-col overflow-hidden border border-r-0 border-[#8f8f8f] bg-[#f1f1f1] shadow-[0_2px_14px_rgba(0,0,0,0.35)]">
      <div className="flex h-[41px] shrink-0 items-center border-b border-[#c4c4c4] pb-px pl-[14px]">
        <h2 className="flex-1 text-[#8c8c8c]">CostDistance_02 - ArcGIS Pro</h2>
        <button aria-label="Maximize" className="mr-11 size-[13px] border border-[#333]" />
        <button aria-label="Close window" className="-mr-1.5"><X size={18} strokeWidth={1.3} color="#333" /></button>
      </div>
      <div className="mt-2 flex flex-1 flex-col pl-[7px]">
        <div className="flex border-b-2 border-[#0078d0]">
          <button className="flex h-[26px] w-[108px] items-center bg-[#0078d0] pl-[7px] pt-px text-white">
            <ModelGlyph />
            <span className="ml-[7px]">Model</span>
            <X size={15} className="ml-[11px]" />
          </button>
        </div>
        <div className="mb-2 flex flex-1 flex-col border-b border-l border-[#ccc] bg-[#f8f8f8]">
          <div className="mt-3 flex h-[31px] items-center justify-end gap-[5px] pr-[3px]">
            <Funnel />
            <span className="mx-1"><Caret className="w-2 fill-[#555]" /></span>
            <SearchBox id="model-search" className="w-[172px]" />
            <button aria-label="Find previous"><svg width="18" height="16" viewBox="0 0 18 16" fill="none" stroke="#666" strokeWidth="3"><path d="M17 8H3M9 1L2 8l7 7" /></svg></button>
            <button aria-label="Find next"><svg width="18" height="16" viewBox="0 0 18 16" fill="none" stroke="#666" strokeWidth="3"><path d="M1 8h14M9 1l7 7-7 7" /></svg></button>
          </div>
          <ModelCanvas />
          <div className="flex h-[10px] items-center gap-[3px] pl-0.5">
            <svg width="9" height="10" viewBox="0 0 9 10" fill="#969696"><path d="M9 0v10L0 5z" /></svg>
            <div className="flex h-full flex-1 bg-[#dfdfdf] pl-[60px] pr-2"><div className="flex-1 bg-[#78bbe6]" /></div>
            <svg width="9" height="10" viewBox="0 0 9 10" fill="#969696"><path d="M0 0v10l9-5z" /></svg>
          </div>
          <div className="flex h-[33px] items-center justify-end pt-0.5">
            <button aria-label="Fit to window"><FitIcon small /></button>
            <button aria-label="Back" className="ml-4"><Arrow color="#5aa9dd" /></button>
            <button aria-label="Forward" className="ml-[14px]"><Arrow color="#b5d8ec" flip /></button>
            <button aria-label="Zoom out" className="ml-2 flex h-6 w-[25px] items-center justify-center bg-white"><span className="h-0.5 w-2 bg-[#555]" /></button>
            <input
              type="range"
              aria-label="Zoom"
              defaultValue={25}
              className="h-[14px] w-[125px] appearance-none bg-[linear-gradient(#a0a0a0,#a0a0a0),linear-gradient(#dfdfdf,#dfdfdf)] bg-[length:30px_4px,100%_4px] bg-left bg-no-repeat [&::-webkit-slider-thumb]:h-[14px] [&::-webkit-slider-thumb]:w-1 [&::-webkit-slider-thumb]:appearance-none [&::-webkit-slider-thumb]:bg-[#777]"
            />
            <button aria-label="Zoom in" className="flex h-6 w-6 items-center justify-center bg-white">
              <svg width="10" height="10" viewBox="0 0 10 10" stroke="#444" strokeWidth="2"><path d="M5 0v10M0 5h10" /></svg>
            </button>
            <span className="h-6 w-[63px] bg-white pl-2 leading-6 text-[#444]">73%</span>
          </div>
        </div>
      </div>
    </section>
  );
}

/* ---------- raster calculator dialog ---------- */

const RASTERS = [
  { name: 'Out back direction raster (2)', grid: true },
  { name: 'P', grid: true },
  { name: 'Q', grid: true },
  { name: 'Q', grid: false },
  { name: 'P', grid: false },
  { name: 'K', grid: false },
];

function RasterCalculator() {
  return (
    <section role="dialog" aria-label="Raster Calculator" className="absolute left-[485px] top-[501px] flex w-[475px] flex-col border border-[#1f86c6] bg-[#f8f8f8] pb-3 text-[#4a4a4a] shadow-[0_2px_14px_rgba(0,0,0,0.4)]">
      <div className="flex h-8 items-center pl-[10px] pr-2.5">
        <h2 className="flex-1 text-[18px] text-[#1f82c0]">Raster Calculator</h2>
        <button aria-label="Close dialog"><X size={16} strokeWidth={1.6} color="#888" /></button>
      </div>
      <div className="mt-[13px] flex h-[30px] items-center pl-[14px] pr-3 text-[15px]">
        <button className="h-[29px] border-b-2 border-[#1f7fc4] pb-0.5 text-sm font-bold">Parameters</button>
        <button className="ml-3 pb-1">Environments</button>
        <button className="ml-3 pb-1">Properties</button>
        <button aria-label="Help" className="ml-auto flex size-[21px] items-center justify-center rounded-full border border-[#5aa9dd] bg-[#e3f2fa] text-base font-semibold leading-4 text-[#5aa9dd]">?</button>
      </div>
      <div className="flex flex-col pl-[25px] pr-[15px]">
        <div className="mt-[17px] leading-5">Map Algebra expression</div>
        <div className="flex h-[29px] items-center text-black">
          <span className="mt-0.5 flex-1">Rasters</span>
          <button aria-label="Browse rasters"><Folder /></button>
          <span className="ml-[11px] mr-auto mt-0.5 w-[162px]">Tools</span>
          <span className="mr-[3px]"><Funnel light /></span>
        </div>
        <div className="flex h-[150px] gap-[11px]">
          <div className="flex w-[237px] overflow-hidden border border-[#a8a8a8] bg-white pr-[3px]">
            <ul className="flex-1 pt-px">
              {RASTERS.map((raster, i) => (
                <li key={i} className="flex h-[27px] items-center gap-[3px] whitespace-nowrap pl-0.5">
                  <RasterIcon grid={raster.grid} />
                  {raster.name}
                </li>
              ))}
            </ul>
            <VerticalScroll before="h-[50px]" thumb="h-[50px]" after="flex-1" />
          </div>
          <div className="flex flex-1 overflow-hidden border border-[#a8a8a8] bg-white pr-[3px]">
            <ul className="flex-1 pl-3 pr-[7px]">
              <li className="-ml-1.5 flex h-8 items-center text-[#999]">Operators</li>
              <li className="flex h-6 items-center border border-[#ddd] bg-[#f4f4f4] pl-1.5">+</li>
              {['-', '*', '/'].map((op) => (
                <li key={op} className="flex h-[30px] items-center pl-[7px] pt-1">{op}</li>
              ))}
            </ul>
            <VerticalScroll before="" thumb="h-[31px]" after="flex-1" />
          </div>
        </div>
        <div className="mt-[5px] flex h-[75px] border border-[#a8a8a8] bg-white pr-1.5">
          <div role="textbox" aria-label="Expression" className="flex-1 whitespace-pre pl-[9px] font-['DejaVu_Sans_Mono',monospace] text-[13px] leading-[22px]">
            <span className="text-[#d80000]">"Q"</span> + <span className="text-[#d80000]">"P"</span>
          </div>
          <VerticalScroll before="" thumb="h-[31px]" after="flex-1" />
        </div>
        <button aria-label="Clear expression" className="mr-[3px] mt-[9px] self-end"><Eraser /></button>
        <label htmlFor="output-raster" className="mt-[10px] leading-5">Output raster</label>
        <div className="flex items-center justify-between pr-[3px]">
          <input id="output-raster" defaultValue="q_rastercalc" className="h-7 w-[400px] border border-[#a0a0a0] bg-white px-1.5 outline-none" />
          <button aria-label="Browse output"><Folder /></button>
        </div>
        <button className="mt-4 h-8 w-[93px] self-end border-2 border-[#444] bg-white">OK</button>
      </div>
      <svg width="13" height="13" viewBox="0 0 13 13" fill="#aaa" className="absolute bottom-1 right-1">
        <path d="M10 0h3v3h-3zM5 5h3v3H5zM10 5h3v3h-3zM0 10h3v3H0zM5 10h3v3H5zM10 10h3v3h-3z" />
      </svg>
    </section>
  );
}

/* ---------- hand drawn links ---------- */

const LINKS: Point[][] = [
  [[109, 511], [121, 513], [135, 518], [155, 526], [170, 537], [185, 550], [200, 562], [215, 578], [235, 598], [254, 616], [266, 636], [300, 666], [335, 692], [370, 714], [400, 728], [440, 737], [480, 740], [496, 739], [505, 737]],
  [[89, 537], [103, 542], [120, 558], [130, 574], [145, 598], [160, 618], [174, 631], [210, 663], [250, 698], [280, 727], [306, 749], [345, 762], [400, 770], [450, 768], [480, 765], [505, 764]],
  [[552, 685], [562, 686], [575, 695], [607, 713], [640, 728], [675, 738], [690, 744], [720, 756], [755, 765], [790, 778], [830, 790], [870, 800], [909, 811], [966, 823], [1010, 829], [1064, 837], [1110, 848], [1168, 857], [1230, 862], [1281, 861], [1310, 852], [1340, 837], [1359, 821], [1375, 795], [1388, 757], [1399, 723], [1399, 690], [1403, 663], [1401, 640]],
  [[557, 714], [572, 709], [585, 710], [610, 722], [640, 733], [660, 736], [730, 736], [750, 733], [775, 727], [800, 716], [830, 707], [850, 699], [880, 687], [910, 672], [940, 657], [966, 642], [989, 626]],
];

// smooth the traced points with quadratic segments through their midpoints
const smooth = (pts: Point[]) =>
  pts.slice(1, -1).reduce((d, p, i) => {
    const next = pts[i + 2];
    return `${d}Q${p[0]} ${p[1]} ${(p[0] + next[0]) / 2} ${(p[1] + next[1]) / 2}`;
  }, `M${pts[0].join(' ')}`) + `L${pts[pts.length - 1].join(' ')}`;

function LinkOverlay() {
  return (
    <svg width="1620" height="1023" className="pointer-events-none absolute left-0 top-0">
      {LINKS.map((pts, i) => (
        <path key={i} d={smooth(pts)} fill="none" stroke="#fb861c" strokeWidth="4" strokeLinecap="round" strokeLinejoin="round" />
      ))}
    </svg>
  );
}

export default function App() {
  return (
    <div className="relative flex h-screen flex-col overflow-hidden bg-[#f1f1f1] font-['Noto_Sans','Open_Sans',sans-serif] text-sm">
      <Header />
      <Ribbon />
      <div className="flex min-h-0 flex-1 pl-[7px]">
        <ContentsPane />
        <MapView />
      </div>
      <ModelWindow />
      <RasterCalculator />
      <LinkOverlay />
    </div>
  );
}
